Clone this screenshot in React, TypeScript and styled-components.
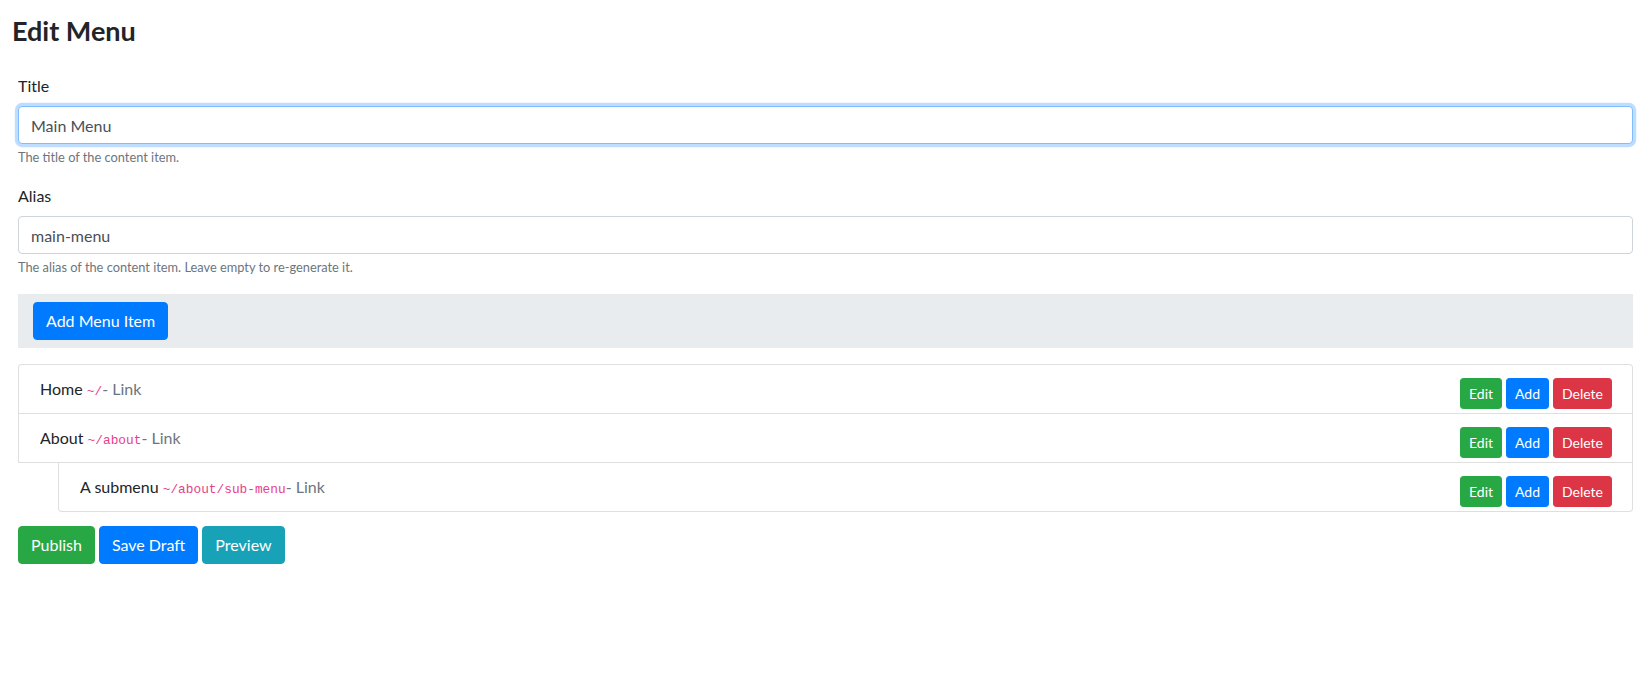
import React from "react";
import styled, { createGlobalStyle } from "styled-components";

const GlobalStyle = createGlobalStyle`
  html, body {
    margin: 0;
    background: #fff;
  }
  body {
    font-family: Lato, "Liberation Sans", sans-serif;
    font-size: 16px;
    line-height: 1.5;
    color: #212529;
  }
  * { box-sizing: border-box; }
`;

const Page = styled.div`
  padding: 0 19px 40px 12px;
`;

const Heading = styled.h1`
  margin: 14px 0 0;
  font-size: 27px;
  font-weight: 700;
  line-height: 34px;
  color: #212529;
`;

const Form = styled.form`
  margin: 26px 0 0 6px;
`;

const FormGroup = styled.div`
  margin-bottom: 17px;
`;

const Label = styled.label`
  display: block;
  margin-bottom: 8px;
`;

const Input = styled.input<{ $focused?: boolean }>`
  display: block;
  width: 100%;
  height: 38px;
  padding: 6px 12px;
  font-family: inherit;
  font-size: 16px;
  line-height: 1.5;
  color: #495057;
  background: #fff;
  border: 1px solid ${(p) => (p.$focused ? "#80bdff" : "#ced4da")};
  border-radius: 4px;
  outline: 0;
  box-shadow: ${(p) => (p.$focused ? "0 0 0 3.2px rgba(0,123,255,.25)" : "none")};
  &:focus {
    border-color: #80bdff;
    box-shadow: 0 0 0 3.2px rgba(0, 123, 255, 0.25);
  }
`;

const Help = styled.small`
  display: block;
  margin-top: 4px;
  font-size: 12.8px;
  line-height: 19.2px;
  color: #6c757d;
`;

const Toolbar = styled.div`
  background: #e9ecef;
  padding: 8px 15px;
  margin: 2px 0 16px;
`;

const variants = {
  success: "#28a745",
  primary: "#007bff",
  danger: "#dc3545",
  info: "#17a2b8",
};

type Variant = keyof typeof variants;

const Button = styled.button<{ $variant: Variant; $small?: boolean }>`
  display: inline-block;
  font-family: inherit;
  font-weight: 400;
  color: #fff;
  background: ${(p) => variants[p.$variant]};
  border: 1px solid ${(p) => variants[p.$variant]};
  cursor: pointer;
  font-size: ${(p) => (p.$small ? "14px" : "16px")};
  line-height: 1.5;
  padding: ${(p) => (p.$small ? "4px 8px" : "6px 12px")};
  border-radius: ${(p) => (p.$small ? "3.2px" : "4px")};
  height: ${(p) => (p.$small ? "31px" : "38px")};
`;

const List = styled.ul`
  list-style: none;
  margin: 0 0 15px;
  padding: 0;
`;

const Item = styled.li<{ $depth: number }>`
  display: flex;
  align-items: flex-start;
  margin-left: ${(p) => p.$depth * 40}px;
  margin-bottom: -1px;
  padding: 12px 20px 12px 21px;
  height: 50px;
  border: 1px solid rgba(0, 0, 0, 0.125);
  background: #fff;
  &:first-child {
    border-top-left-radius: 4px;
    border-top-right-radius: 4px;
  }
  &:last-child {
    border-bottom-left-radius: 4px;
    border-bottom-right-radius: 4px;
  }
`;

const ItemText = styled.div`
  flex: 1;
`;

const Path = styled.code`
  font-family: "Liberation Mono", "DejaVu Sans Mono", monospace;
  font-size: 12.8px;
  color: #e83e8c;
`;

const Muted = styled.span`
  color: #6c757d;
`;

const Actions = styled.div`
  display: flex;
  gap: 4px;
  margin-top: 1px;
`;

const Footer = styled.div`
  display: flex;
  gap: 4px;
`;

const items = [
  { name: "Home", url: "~/", depth: 0 },
  { name: "About", url: "~/about", depth: 0 },
  { name: "A submenu", url: "~/about/sub-menu", depth: 1 },
];

export default function App() {
  return (
    <>
      <GlobalStyle />
      <Page>
        <Heading>Edit Menu</Heading>
        <Form onSubmit={(e) => e.preventDefault()}>
          <FormGroup>
            <Label htmlFor="title">Title</Label>
            <Input id="title" defaultValue="Main Menu" $focused autoFocus />
            <Help>The title of the content item.</Help>
          </FormGroup>
          <FormGroup>
            <Label htmlFor="alias">Alias</Label>
            <Input id="alias" defaultValue="main-menu" />
            <Help>The alias of the content item. Leave empty to re-generate it.</Help>
          </FormGroup>
          <Toolbar>
            <Button type="button" $variant="primary">Add Menu Item</Button>
          </Toolbar>
          <List>
            {items.map((it) => (
              <Item key={it.url} $depth={it.depth}>
                <ItemText>
                  {it.name} <Path>{it.url}</Path>
                  <Muted>- Link</Muted>
                </ItemText>
                <Actions>
                  <Button type="button" $variant="success" $small>Edit</Button>
                  <Button type="button" $variant="primary" $small>Add</Button>
                  <Button type="button" $variant="danger" $small>Delete</Button>
                </Actions>
              </Item>
            ))}
          </List>
          <Footer>
            <Button type="button" $variant="success">Publish</Button>
            <Button type="button" $variant="primary">Save Draft</Button>
            <Button type="button" $variant="info">Preview</Button>
          </Footer>
        </Form>
      </Page>
    </>
  );
}
